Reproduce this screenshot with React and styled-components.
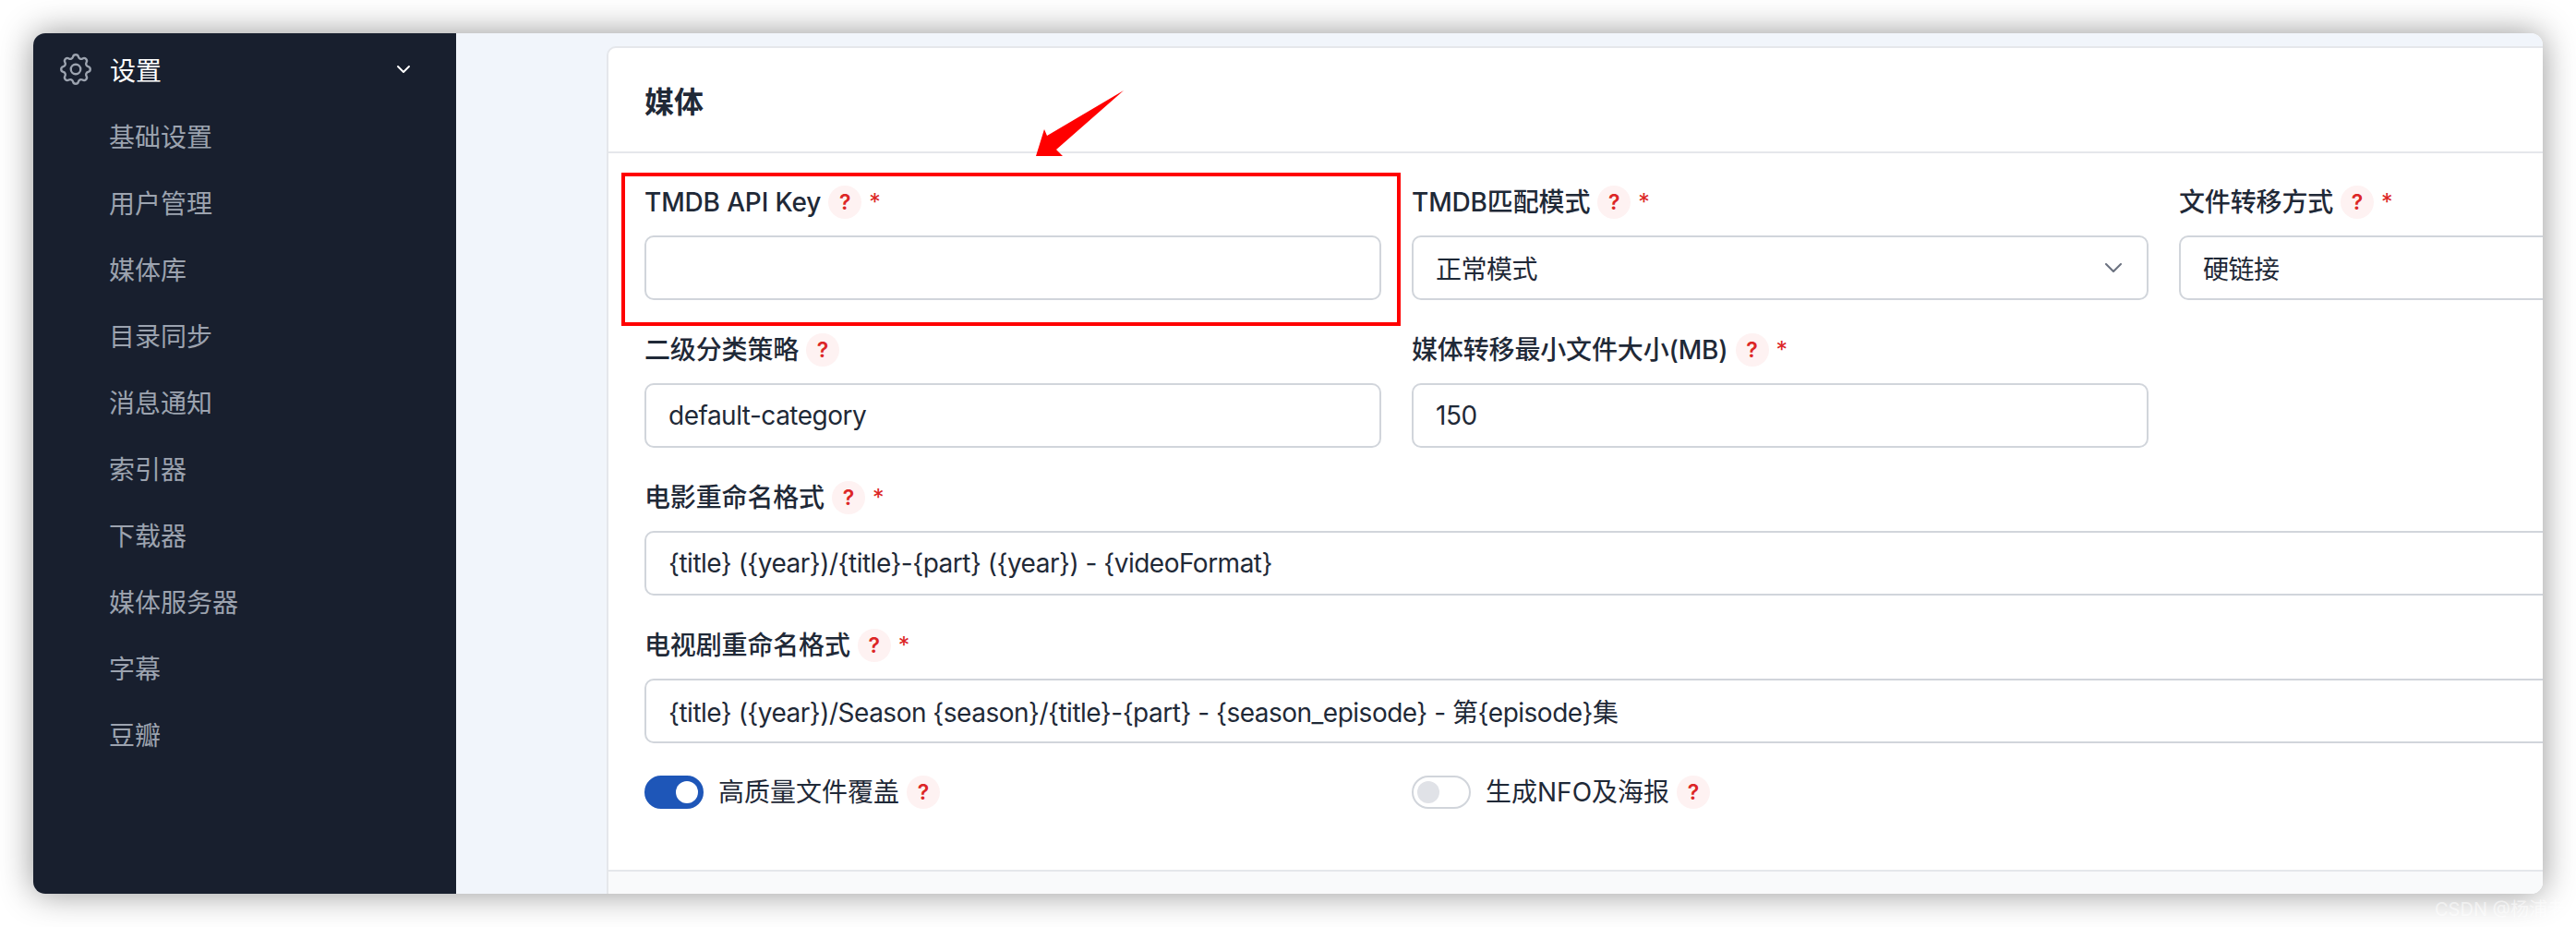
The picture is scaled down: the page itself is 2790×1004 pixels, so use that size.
import React from "react";
import styled, { createGlobalStyle } from "styled-components";
import { HiOutlineCog } from "react-icons/hi";

const menuItems = [
	"基础设置",
	"用户管理",
	"媒体库",
	"目录同步",
	"消息通知",
	"索引器",
	"下载器",
	"媒体服务器",
	"字幕",
	"豆瓣",
];

const GlobalStyle = createGlobalStyle`
	html, body {
		margin: 0;
		padding: 0;
		background: #fff;
	}
	* {
		box-sizing: border-box;
	}
	body {
		font-family: Inter, "Noto Sans CJK SC", sans-serif;
		color: #111827;
	}
`;

function Help() {
	return <HelpBadge>?</HelpBadge>;
}

function FieldLabel({ children, required }) {
	return (
		<LabelRow>
			<LabelText>{children}</LabelText>
			<Help />
			{required && <Star>*</Star>}
		</LabelRow>
	);
}

function Chevron({ size, color, width }) {
	return (
		<svg width={size} height={size} viewBox="0 0 20 20" fill="none">
			<path
				d="M5 7.5l5 5 5-5"
				stroke={color}
				strokeWidth={width}
				strokeLinecap="round"
				strokeLinejoin="round"
			/>
		</svg>
	);
}

export default function App() {
	return (
		<Stage>
			<GlobalStyle />
			<Window>
				<Sidebar>
					<SideHead>
						<GearWrap>
							<HiOutlineCog size={42} />
						</GearWrap>
						<SideHeadText>设置</SideHeadText>
						<SideChevron>
							<Chevron size={24} color="#fff" width={1.6} />
						</SideChevron>
					</SideHead>
					{menuItems.map((item) => (
						<SideItem key={item}>{item}</SideItem>
					))}
				</Sidebar>
				<Main>
					<Card>
						<CardHead>媒体</CardHead>
						<FormGrid>
							<Field>
								<FieldLabel required>TMDB API Key</FieldLabel>
								<Box />
							</Field>
							<Field>
								<FieldLabel required>TMDB匹配模式</FieldLabel>
								<Box>
									正常模式
									<Chevron size={32} color="#6b7280" width={1.3} />
								</Box>
							</Field>
							<Field>
								<FieldLabel required>文件转移方式</FieldLabel>
								<Box>硬链接</Box>
							</Field>
							<Field>
								<FieldLabel>二级分类策略</FieldLabel>
								<Box>default-category</Box>
							</Field>
							<Field>
								<FieldLabel required>媒体转移最小文件大小(MB)</FieldLabel>
								<Box>150</Box>
							</Field>
							<Field />
							<Field $wide>
								<FieldLabel required>电影重命名格式</FieldLabel>
								<Box>{"{title} ({year})/{title}-{part} ({year}) - {videoFormat}"}</Box>
							</Field>
							<Field $wide>
								<FieldLabel required>电视剧重命名格式</FieldLabel>
								<Box>
									{"{title} ({year})/Season {season}/{title}-{part} - {season_episode} - 第{episode}集"}
								</Box>
							</Field>
							<SwitchRow>
								<Toggle $on>
									<Knob $on />
								</Toggle>
								<SwitchText>高质量文件覆盖</SwitchText>
								<Help />
							</SwitchRow>
							<SwitchRow>
								<Toggle>
									<Knob />
								</Toggle>
								<SwitchText>生成NFO及海报</SwitchText>
								<Help />
							</SwitchRow>
						</FormGrid>
						<CardFoot />
					</Card>
				</Main>
			</Window>
			{/* annotation drawn on top of the screenshot */}
			<RedBox />
			<Arrow width="110" height="80" viewBox="0 0 110 80">
				<polygon points="105,8 22,57 19,50 10,79 39,79 32,72" fill="#ff0000" />
			</Arrow>
			<Watermark>CSDN @杨浦老苏</Watermark>
		</Stage>
	);
}

const Stage = styled.div`
	position: relative;
	width: 2790px;
	height: 1004px;
	padding: 36px;
	overflow: hidden;
	background: #fff;
`;

const Window = styled.div`
	display: flex;
	width: 2718px;
	height: 932px;
	border-radius: 13px;
	overflow: hidden;
	box-shadow: 0 0 36px rgba(0, 0, 0, 0.42);
`;

// sidebar
const Sidebar = styled.nav`
	flex: 0 0 458px;
	padding-top: 3px;
	background: #181f2e;
`;

const SideHead = styled.div`
	display: flex;
	align-items: center;
	height: 72px;
	padding-left: 25px;
`;

const GearWrap = styled.span`
	display: flex;
	color: #9ca3af;

	path {
		stroke-width: 1.35;
	}
`;

const SideHeadText = styled.span`
	margin-left: 16px;
	font-size: 28px;
	color: #fff;
`;

const SideChevron = styled.span`
	display: flex;
	margin-left: auto;
	margin-right: 45px;
`;

const SideItem = styled.div`
	display: flex;
	align-items: center;
	height: 72px;
	padding-left: 82px;
	font-size: 28px;
	color: #9ca3af;
`;

// main area
const Main = styled.main`
	flex: 1;
	min-width: 0;
	padding: 14px 0 0 163px;
	background: #f1f5fb;
`;

const Card = styled.section`
	width: 2520px;
	height: 930px;
	border: 2px solid #e5e7eb;
	border-radius: 10px;
	background: #fff;
`;

const CardHead = styled.h2`
	display: flex;
	align-items: center;
	height: 114px;
	margin: 0;
	padding-left: 39px;
	border-bottom: 2px solid #e5e7eb;
	font-size: 32px;
	font-weight: 600;
	color: #1f2937;
`;

const FormGrid = styled.div`
	display: grid;
	grid-template-columns: repeat(3, 798px);
	column-gap: 33px;
	row-gap: 36px;
	align-content: start;
	height: 776px;
	padding: 35px 39px 0;
`;

const Field = styled.div`
	grid-column: ${(p) => (p.$wide ? "1 / -1" : "auto")};
`;

const LabelRow = styled.div`
	display: flex;
	align-items: center;
	height: 36px;
	margin-bottom: 18px;
`;

const LabelText = styled.span`
	font-size: 28px;
	line-height: 36px;
	font-weight: 500;
	letter-spacing: -0.15px;
	color: #1f2937;
`;

const HelpBadge = styled.span`
	display: flex;
	align-items: center;
	justify-content: center;
	flex: none;
	width: 36px;
	height: 36px;
	margin-left: 8px;
	border-radius: 50%;
	background: #fef2f2;
	font-size: 23px;
	font-weight: 600;
	color: #dc2626;
`;

const Star = styled.span`
	align-self: flex-start;
	margin-left: 8px;
	font-size: 25px;
	line-height: 36px;
	color: #dc2626;
`;

const Box = styled.div`
	display: flex;
	align-items: center;
	justify-content: space-between;
	height: 70px;
	padding: 0 20px 0 24px;
	border: 2px solid #d1d5db;
	border-radius: 10px;
	font-size: 28px;
	letter-spacing: -0.5px;
	color: #1f2937;
	background: #fff;
`;

const SwitchRow = styled.div`
	display: flex;
	align-items: center;
	height: 36px;
	margin-top: -1px;
`;

const Toggle = styled.span`
	display: flex;
	align-items: center;
	justify-content: ${(p) => (p.$on ? "flex-end" : "flex-start")};
	flex: none;
	width: 64px;
	height: 36px;
	padding: 0 4px;
	border: 2px solid ${(p) => (p.$on ? "#1e56b8" : "#d1d5db")};
	border-radius: 18px;
	background: ${(p) => (p.$on ? "#1e56b8" : "#fff")};
`;

const Knob = styled.span`
	width: 24px;
	height: 24px;
	border-radius: 50%;
	background: ${(p) => (p.$on ? "#fff" : "#e0e2e7")};
`;

const SwitchText = styled.span`
	margin-left: 16px;
	font-size: 28px;
	line-height: 36px;
	color: #1f2937;
`;

const CardFoot = styled.div`
	height: 40px;
	border-top: 2px solid #e5e7eb;
	background: #f9fafb;
`;

// overlays
const RedBox = styled.div`
	position: absolute;
	left: 673px;
	top: 187px;
	width: 844px;
	height: 166px;
	border: 4px solid #ff0000;
`;

const Arrow = styled.svg`
	position: absolute;
	left: 1112px;
	top: 90px;
`;

const Watermark = styled.span`
	position: absolute;
	left: 2637px;
	top: 973px;
	font-size: 20px;
	line-height: 24px;
	white-space: nowrap;
	color: rgba(255, 255, 255, 0.55);
`;
